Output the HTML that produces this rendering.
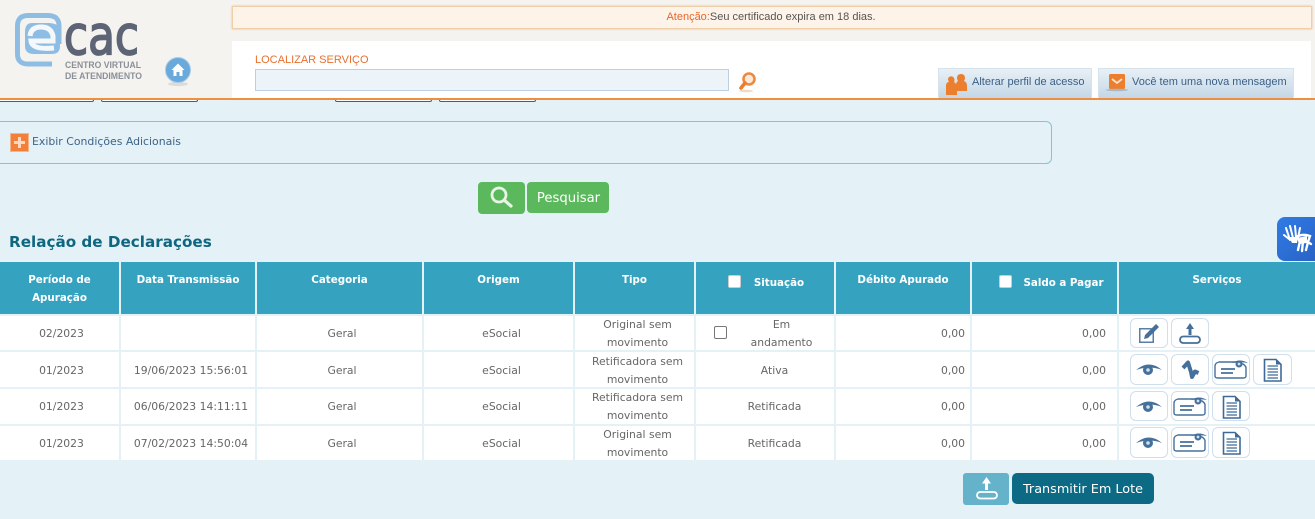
<!DOCTYPE html>
<html lang="pt-BR"><head><meta charset="utf-8"><title>e-CAC</title>
<style>
html,body{margin:0;padding:0}
body{width:1315px;height:519px;overflow:hidden;position:relative;background:#e4f1f6;font-family:"DejaVu Sans",sans-serif;color:#666}
div,span.a,svg.a{position:absolute;box-sizing:border-box}
.l{font-family:"Liberation Sans",sans-serif}
.h{background:#35a3c0;color:#fff;font-weight:bold;font-size:10.3px;text-align:center;line-height:18px;top:262px;height:52px;padding-top:9px;white-space:nowrap}
.c{background:#fff;font-size:10.8px;line-height:18px;text-align:center;display:flex;align-items:center;justify-content:center;color:#666;padding-top:2px}
.c.t{padding-top:0}
.r{justify-content:flex-end}
.b{background:#fff;border:1px solid #cfdfec;border-radius:6px;width:38px}
.b svg{display:block;margin:-1px 0 0 -1px}
.ck{width:13px;height:13px;background:#fff;border-radius:2px;border:1px solid #777}
.tab{top:100px;height:2px;background:#fff;border:1px solid #44606a;border-top:0;border-radius:0 0 3px 3px}
</style></head><body>
<svg width="0" height="0" style="position:absolute"><defs>
<g id="eye"><path d="M6 16Q19 5 32 16Q19 11 6 16Z" fill="#46709c"/><circle cx="18" cy="16" r="5" fill="#46709c"/><circle cx="18" cy="16" r="1.800" fill="#cfe0ee"/></g>
<g id="doc"><path d="M11.500 5.500H23L28 10.500V27H11.500Z" fill="#fff" stroke="#3f6a98" stroke-width="1.600"/><path d="M23 5V10.500H28" fill="#3f6a98"/><path d="M14.500 12H25M14.500 15H25M14.500 18H25M14.500 21H25M14.500 24H25" stroke="#3f6a98" stroke-width="1.200"/></g>
<g id="card"><path d="M3 12Q3 9 7 8H25L31 10Q34 12 34 14V22Q34 24 31 24H6Q3 24 3 22Z" fill="#fff" stroke="#46709c" stroke-width="1.400"/><path d="M9 15H23M9 19H21" stroke="#46709c" stroke-width="1.700"/><path d="M20 9Q28 4 36 9Q29 7.500 20 9Z" fill="#46709c"/><circle cx="27" cy="10" r="3.500" fill="#46709c"/><circle cx="27" cy="10" r="1.400" fill="#cfe0ee"/></g>
<g id="wave"><path d="M12 14L17 8.500L20 18L21 23L24 17.500L27.500 19" fill="none" stroke="#46709c" stroke-width="4" stroke-linejoin="round"/></g>
<g id="pen"><path d="M9 10H22L20.500 11.500H10.500V23.500H22.500V14L24 12.500V25H9Z" fill="#5a7ea6"/><path d="M14 21L15 17L26 6L29 9L18 20Z" fill="#46709c"/></g>
<g id="up"><path d="M19 5L23 11H20.500V17H17.500V11H15Z" fill="#46709c"/><rect x="9" y="18.500" width="20" height="6.500" rx="3.200" fill="none" stroke="#46709c" stroke-width="1.800"/></g>
</defs></svg>

<!-- top header -->
<div style="left:0;top:0;width:1315px;height:98px;background:#f5f3f0"></div>

<!-- logo -->
<svg class="a" style="left:10px;top:8px" width="135" height="78" viewBox="0 0 135 78">
<path d="M42 56H18Q7.500 56 7.500 46V18Q7.500 7.500 18 7.500H38Q49 7.500 49 18V36" fill="none" stroke="#8ebde3" stroke-width="5"/>
<path d="M22 15H38Q50 15 50 24V38Q50 46 42 46H24Q15 46 15 38V24Q15 15 22 15Z" fill="#8ebde3"/>
<path d="M20 28Q21 19 31 19Q41 19 43 28V33H21Q22 42 44 40" fill="none" stroke="#f5f8fb" stroke-width="5"/>
<text x="54" y="46" font-family="DejaVu Sans,sans-serif" font-size="54" fill="#5d6475" stroke="#5d6475" stroke-width="1.800" textLength="75" lengthAdjust="spacingAndGlyphs">cac</text>
<text x="55" y="60" font-family="Liberation Sans,sans-serif" font-size="9.500" font-weight="bold" fill="#8a8f98" textLength="76" lengthAdjust="spacingAndGlyphs">CENTRO VIRTUAL</text>
<text x="55" y="71" font-family="Liberation Sans,sans-serif" font-size="9.500" font-weight="bold" fill="#8a8f98" textLength="77" lengthAdjust="spacingAndGlyphs">DE ATENDIMENTO</text>
</svg>
<svg class="a" style="left:163px;top:56px" width="30" height="32" viewBox="0 0 30 32">
<ellipse cx="15" cy="28" rx="10" ry="2.200" fill="#dcdcd8"/>
<circle cx="15" cy="14" r="12.500" fill="#6aa9dc" stroke="#aacbe6" stroke-width="1"/>
<path d="M15 7.500L21.500 14H19.500V20H16.500V16H13.500V20H10.500V14H8.500Z" fill="#fff"/>
</svg>

<!-- alert -->
<div class="l" style="left:232px;top:6px;width:1080px;height:23px;background:#fdf3e8;border:1px solid #f0cfa8;box-shadow:0 0 2px #e8b98a;font-size:11px;line-height:20px;text-align:center;color:#555;padding-right:2px"><span style="color:#e8672a">Atenção:</span>Seu certificado expira em 18 dias.</div>

<!-- search panel -->
<div style="left:232px;top:41px;width:1079px;height:57px;background:#fff"></div>
<div class="l" style="left:255px;top:54px;font-size:11px;color:#e8702f;white-space:nowrap">LOCALIZAR SERVIÇO</div>
<div style="left:255px;top:69px;width:474px;height:22px;background:#edf4f9;border:1px solid #bdd0e2"></div>
<svg class="a" style="left:737px;top:71px" width="21" height="22" viewBox="0 0 21 22">
<circle cx="12" cy="8" r="5.500" fill="#fbeadb" stroke="#ec8a3e" stroke-width="2.600"/>
<path d="M8 12L4 17" stroke="#ec7d2c" stroke-width="3.600" stroke-linecap="round"/>
<ellipse cx="9" cy="20" rx="7" ry="1.200" fill="#f2d9c3"/>
</svg>

<div style="left:938px;top:68px;width:154px;height:30px;background:linear-gradient(#e8f0f6,#c4d7e6);border:1px solid #d6e2ec;border-bottom:0"></div>
<svg class="a" style="left:944px;top:71px" width="24" height="26" viewBox="0 0 24 26">
<path d="M2 24V15Q2 11 5 11Q3 8 5 6Q8 4 10 7Q11 9 10 11Q12 12 12 14Q12 11 14 10Q12 7 14 4Q17 2 20 4Q22 7 20 10Q23 11 23 15V20H13V24Z" fill="#ec7f2e"/>
</svg>
<div class="l" style="left:972px;top:76px;font-size:11px;color:#3b5f86;white-space:nowrap">Alterar perfil de acesso</div>

<div style="left:1098px;top:68px;width:196px;height:30px;background:linear-gradient(#e8f0f6,#c4d7e6);border:1px solid #d6e2ec;border-bottom:0"></div>
<svg class="a" style="left:1105px;top:72px" width="24" height="22" viewBox="0 0 24 22">
<rect x="4" y="2" width="16" height="15" rx="1.500" fill="#ec7f2e"/>
<path d="M7 7L12 11L17 7" fill="none" stroke="#fbe3cf" stroke-width="1.800"/>
<ellipse cx="12" cy="18" rx="11" ry="1.200" fill="#a8b7c4"/>
</svg>
<div class="l" style="left:1132px;top:76px;font-size:11px;color:#3b5f86;white-space:nowrap">Você tem uma nova mensagem</div>

<!-- orange line -->
<div class="tab" style="left:-2px;width:96px"></div>
<div class="tab" style="left:101px;width:97px"></div>
<div class="tab" style="left:335px;width:97px"></div>
<div class="tab" style="left:439px;width:97px"></div>
<div style="left:0;top:98px;width:1315px;height:2px;background:#ee8e3f"></div>

<!-- conditions -->
<div style="left:-6px;top:121px;width:1058px;height:43px;border:1px solid #8fc1cd;border-radius:6px"></div>
<div style="left:10px;top:133px;width:19px;height:19px;background:#f0803a;border:1px solid #f7b48a"></div>
<div style="left:18px;top:137px;width:3px;height:11px;background:#fcd9c0"></div>
<div style="left:14px;top:141px;width:11px;height:3px;background:#fcd9c0"></div>
<div style="left:32px;top:135px;font-size:10.900px;color:#3f6488;white-space:nowrap">Exibir Condições Adicionais</div>

<!-- search buttons -->
<div style="left:478px;top:182px;width:47px;height:32px;background:#5cb85c;border-radius:4px"></div>
<svg class="a" style="left:488px;top:185px" width="28" height="26" viewBox="0 0 28 26">
<circle cx="11" cy="10" r="7" fill="none" stroke="#e6f5e6" stroke-width="2.800"/>
<path d="M16 15L23 21" stroke="#e6f5e6" stroke-width="3.200" stroke-linecap="round"/>
</svg>
<div style="left:527px;top:182px;width:82px;height:31px;background:#5cb85c;border-radius:4px;color:#fff;font-size:13.200px;line-height:33px;text-align:center;padding-left:1px">Pesquisar</div>

<!-- title -->
<div style="left:9px;top:232px;font-size:15.200px;font-weight:bold;color:#0f6680;line-height:20px;white-space:nowrap">Relação de Declarações</div>

<!-- sign-language widget -->
<div style="left:1277px;top:217px;width:40px;height:44px;background:linear-gradient(135deg,#2f7ce6,#2a62c4);border-radius:8px 0 0 8px"></div>
<svg class="a" style="left:1283px;top:224px" width="30" height="30" viewBox="0 0 30 30">
<path d="M7 16L3 4M10 14L7 2M13 13L12 2M15 14L17 4M6 15L1 11" stroke="#fff" stroke-width="2" stroke-linecap="round" fill="none"/>
<path d="M6 13H15L14 19H9Z" fill="#fff"/>
<path d="M12 14Q18 9 27 12L25 18L23 26M20 17L19 27M17 17L15 26M23 17L28 20" stroke="#fff" stroke-width="2.400" fill="none" stroke-linecap="round"/>
<path d="M14 14L24 12L24 19L16 20Z" fill="#fff"/>
</svg>

<!-- table head -->
<div class="h" style="left:0;width:119px">Período de<br>Apuração</div>
<div class="h" style="left:121px;width:134px">Data Transmissão</div>
<div class="h" style="left:257px;width:165px">Categoria</div>
<div class="h" style="left:424px;width:149px">Origem</div>
<div class="h" style="left:575px;width:119px">Tipo</div>
<div class="h" style="left:696px;width:138px;padding:12px 0 0 28px">Situação</div>
<div class="ck" style="left:728px;top:275px;border-color:#ccc"></div>
<div class="h" style="left:836px;width:134px">Débito Apurado</div>
<div class="h" style="left:972px;width:145px;padding:12px 0 0 38px">Saldo a Pagar</div>
<div class="ck" style="left:999px;top:275px;border-color:#ccc"></div>
<div class="h" style="left:1119px;width:196px">Serviços</div>

<!-- row 1 -->
<div class="c" style="left:0;top:316px;width:119px;height:34px;padding-left:4px">02/2023</div>
<div class="c" style="left:121px;top:316px;width:134px;height:34px"></div>
<div class="c" style="left:257px;top:316px;width:165px;height:34px;padding-left:5px">Geral</div>
<div class="c" style="left:424px;top:316px;width:149px;height:34px;padding-left:6px">eSocial</div>
<div class="c" style="left:575px;top:316px;width:119px;height:34px;padding-left:6px">Original sem<br>movimento</div>
<div class="c" style="left:696px;top:316px;width:138px;height:34px;padding-left:33px">Em<br>andamento</div>
<div class="ck" style="left:714px;top:326px"></div>
<div class="c r" style="left:836px;top:316px;width:134px;height:34px;padding-right:5px">0,00</div>
<div class="c r" style="left:972px;top:316px;width:145px;height:34px;padding-right:11px">0,00</div>
<div class="c" style="left:1119px;top:316px;width:196px;height:34px"></div>

<!-- row 2 -->
<div class="c" style="left:0;top:352px;width:119px;height:35px;padding-left:4px">01/2023</div>
<div class="c" style="left:121px;top:352px;width:134px;height:35px;padding-left:6px">19/06/2023 15:56:01</div>
<div class="c" style="left:257px;top:352px;width:165px;height:35px;padding-left:5px">Geral</div>
<div class="c" style="left:424px;top:352px;width:149px;height:35px;padding-left:6px">eSocial</div>
<div class="c" style="left:575px;top:352px;width:119px;height:35px;padding-left:6px">Retificadora sem<br>movimento</div>
<div class="c" style="left:696px;top:352px;width:138px;height:35px;padding-left:19px">Ativa</div>
<div class="c r" style="left:836px;top:352px;width:134px;height:35px;padding-right:5px">0,00</div>
<div class="c r" style="left:972px;top:352px;width:145px;height:35px;padding-right:11px">0,00</div>
<div class="c" style="left:1119px;top:352px;width:196px;height:35px"></div>

<!-- row 3 -->
<div class="c t" style="left:0;top:389px;width:119px;height:35px;padding-left:4px">01/2023</div>
<div class="c t" style="left:121px;top:389px;width:134px;height:35px;padding-left:6px">06/06/2023 14:11:11</div>
<div class="c t" style="left:257px;top:389px;width:165px;height:35px;padding-left:5px">Geral</div>
<div class="c t" style="left:424px;top:389px;width:149px;height:35px;padding-left:6px">eSocial</div>
<div class="c t" style="left:575px;top:389px;width:119px;height:35px;padding-left:6px">Retificadora sem<br>movimento</div>
<div class="c t" style="left:696px;top:389px;width:138px;height:35px;padding-left:19px">Retificada</div>
<div class="c r t" style="left:836px;top:389px;width:134px;height:35px;padding-right:5px">0,00</div>
<div class="c r t" style="left:972px;top:389px;width:145px;height:35px;padding-right:11px">0,00</div>
<div class="c t" style="left:1119px;top:389px;width:196px;height:35px"></div>

<!-- row 4 -->
<div class="c" style="left:0;top:426px;width:119px;height:34px;padding-left:4px">01/2023</div>
<div class="c" style="left:121px;top:426px;width:134px;height:34px;padding-left:6px">07/02/2023 14:50:04</div>
<div class="c" style="left:257px;top:426px;width:165px;height:34px;padding-left:5px">Geral</div>
<div class="c" style="left:424px;top:426px;width:149px;height:34px;padding-left:6px">eSocial</div>
<div class="c" style="left:575px;top:426px;width:119px;height:34px;padding-left:6px">Original sem<br>movimento</div>
<div class="c" style="left:696px;top:426px;width:138px;height:34px;padding-left:19px">Retificada</div>
<div class="c r" style="left:836px;top:426px;width:134px;height:34px;padding-right:5px">0,00</div>
<div class="c r" style="left:972px;top:426px;width:145px;height:34px;padding-right:11px">0,00</div>
<div class="c" style="left:1119px;top:426px;width:196px;height:34px"></div>

<!-- service buttons -->
<div class="b" style="left:1130px;top:318px;height:30px"><svg width="38" height="30" viewBox="0 0 38 30"><use href="#pen"/></svg></div>
<div class="b" style="left:1171px;top:318px;height:30px"><svg width="38" height="30" viewBox="0 0 38 30"><use href="#up"/></svg></div>

<div class="b" style="left:1130px;top:354px;height:31px"><svg width="38" height="30" viewBox="0 0 38 30"><use href="#eye"/></svg></div>
<div class="b" style="left:1171px;top:354px;height:31px"><svg width="38" height="30" viewBox="0 0 38 30"><use href="#wave"/></svg></div>
<div class="b" style="left:1212px;top:354px;height:31px"><svg width="38" height="30" viewBox="0 0 38 30"><use href="#card"/></svg></div>
<div class="b" style="left:1253px;top:354px;height:31px;width:39px"><svg width="38" height="30" viewBox="0 0 38 30"><use href="#doc"/></svg></div>

<div class="b" style="left:1130px;top:391px;height:30px"><svg width="38" height="30" viewBox="0 0 38 30"><use href="#eye"/></svg></div>
<div class="b" style="left:1171px;top:391px;height:30px"><svg width="38" height="30" viewBox="0 0 38 30"><use href="#card"/></svg></div>
<div class="b" style="left:1212px;top:391px;height:30px"><svg width="38" height="30" viewBox="0 0 38 30"><use href="#doc"/></svg></div>

<div class="b" style="left:1130px;top:427px;height:31px"><svg width="38" height="30" viewBox="0 0 38 30"><use href="#eye"/></svg></div>
<div class="b" style="left:1171px;top:427px;height:31px"><svg width="38" height="30" viewBox="0 0 38 30"><use href="#card"/></svg></div>
<div class="b" style="left:1212px;top:427px;height:31px"><svg width="38" height="30" viewBox="0 0 38 30"><use href="#doc"/></svg></div>

<!-- bottom buttons -->
<div style="left:963px;top:473px;width:46px;height:32px;background:#65b3cb;border-radius:3px"></div>
<svg class="a" style="left:967px;top:474px" width="38" height="30" viewBox="0 0 38 30">
<path d="M19.500 3L24 9.500H21V16H18V9.500H15Z" fill="#fff"/><rect x="10" y="18" width="20" height="6.500" rx="3.200" fill="none" stroke="#fff" stroke-width="1.800"/>
</svg>
<div style="left:1012px;top:473px;width:142px;height:31px;background:#0c6a85;border-radius:5px;color:#fff;font-size:12.800px;line-height:33px;text-align:center;white-space:nowrap">Transmitir Em Lote</div>
</body></html>
